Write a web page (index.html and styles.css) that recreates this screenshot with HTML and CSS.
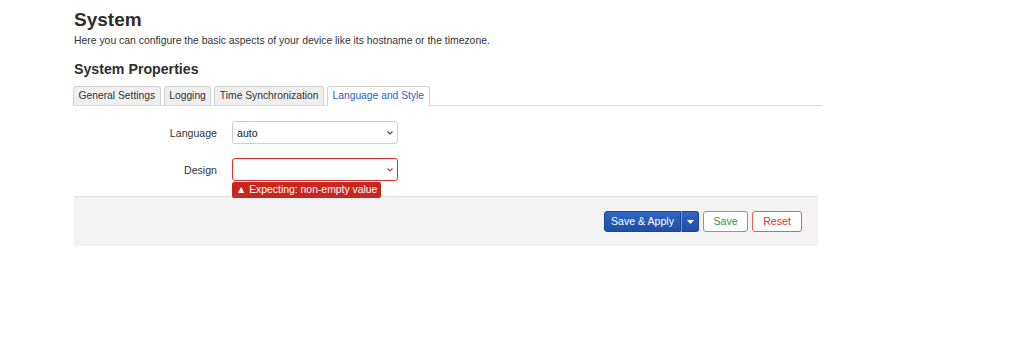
FILE: index.html
```html
<!DOCTYPE html>
<html>
<head>
<meta charset="utf-8">
<link rel="stylesheet" href="styles.css">
</head>
<body>
<div class="page">
  <h1 class="title">System</h1>
  <p class="desc">Here you can configure the basic aspects of your device like its hostname or the timezone.</p>
  <h2 class="section">System Properties</h2>
  <ul class="tabs">
    <li class="tab">General Settings</li>
    <li class="tab">Logging</li>
    <li class="tab">Time Synchronization</li>
    <li class="tab active">Language and Style</li>
  </ul>
  <div class="form">
    <div class="row">
      <div class="label">Language</div>
      <div class="field">
        <div class="select"><span>auto</span><svg class="chev" width="6" height="4" viewBox="0 0 6 4"><path d="M0.5 0.5 L3 3 L5.5 0.5" fill="none" stroke="#444" stroke-width="1.1"/></svg></div>
      </div>
    </div>
    <div class="row">
      <div class="label">Design</div>
      <div class="field">
        <div class="select invalid"><span></span><svg class="chev" width="6" height="4" viewBox="0 0 6 4"><path d="M0.5 0.5 L3 3 L5.5 0.5" fill="none" stroke="#d9322a" stroke-width="1.1"/></svg></div>
        <div class="tip">▲ Expecting: non-empty value</div>
      </div>
    </div>
  </div>
  <div class="actions">
    <div class="btn-group">
      <span class="btn apply">Save &amp; Apply</span><span class="btn apply caret"><svg width="7" height="4" viewBox="0 0 7 4"><path d="M0 0 H7 L3.5 4 Z" fill="#fff"/></svg></span>
    </div>
    <span class="btn save">Save</span>
    <span class="btn reset">Reset</span>
  </div>
</div>
</body>
</html>
```

FILE: styles.css
```css
html, body {
  margin: 0;
  padding: 0;
  background: #fff;
}
body {
  font-family: "Liberation Sans", Arial, Helvetica, sans-serif;
  color: #333;
}
.page {
  width: 748px;
  padding: 9px 0 0 74px;
}
.title {
  margin: 0;
  font-size: 19px;
  line-height: 22px;
  font-weight: bold;
  color: #2e2e2e;
}
.desc {
  margin: 3px 0 0;
  font-size: 10.4px;
  line-height: 14px;
  color: #333;
}
.section {
  margin: 12px 0 0;
  font-size: 14.2px;
  line-height: 18px;
  font-weight: bold;
  color: #2e2e2e;
}
.tabs {
  list-style: none;
  margin: 8px 0 0 -1px;
  padding: 0;
  display: flex;
  gap: 3px;
  border-bottom: 1px solid #dcdcdc;
}
.tab {
  height: 18px;
  line-height: 18px;
  padding: 0 4.5px;
  font-size: 10.3px;
  color: #333;
  background: #efefef;
  border: 1px solid #d2d2d2;
  border-radius: 3px 3px 0 0;
  margin-bottom: -1px;
  border-bottom: 1px solid #dcdcdc;
}
.tab.active {
  background: #fff;
  color: #2a63bf;
  border-bottom-color: #fff;
}
.form {
  padding-top: 15px;
  padding-bottom: 15px;
  display: flex;
  flex-direction: column;
  gap: 14px;
}
.row {
  display: flex;
  align-items: center;
}
.label {
  width: 143px;
  text-align: right;
  font-size: 10.6px;
  color: #333;
}
.field {
  margin-left: 15px;
  position: relative;
}
.select {
  width: 166px;
  height: 23px;
  box-sizing: border-box;
  border: 1px solid #cfcfcf;
  border-radius: 3px;
  display: flex;
  align-items: center;
  justify-content: space-between;
  padding: 0 4px 0 4px;
  font-size: 10.6px;
  color: #222;
  background: #fff;
}
.select.invalid {
  border-color: #d9322a;
}
.chev {
  display: block;
}
.tip {
  position: absolute;
  left: 0;
  top: 24px;
  height: 16px;
  line-height: 16px;
  padding: 0 4px;
  white-space: nowrap;
  background: #c8261e;
  color: #fff;
  font-size: 10.4px;
  border-radius: 2px;
  z-index: 2;
}
.actions {
  width: 744px;
  height: 49px;
  background: #f3f3f3;
  border-top: 1px solid #e0e0e0;
  display: flex;
  align-items: center;
  justify-content: flex-end;
  gap: 4px;
}
.actions .reset {
  margin-right: 16px;
}
.btn-group {
  display: flex;
}
.btn {
  box-sizing: border-box;
  height: 21px;
  line-height: 19px;
  font-size: 10.6px;
  border-radius: 3px;
  border: 1px solid;
  text-align: center;
  display: inline-block;
}
.apply {
  width: 77px;
  color: #fff;
  background: linear-gradient(#2f66c4, #1f4ea5);
  border-color: #1b4597;
  border-radius: 3px 0 0 3px;
}
.apply.caret {
  width: 18px;
  border-radius: 0 3px 3px 0;
  border-left: 1px solid #6f93d4;
  display: inline-flex;
  align-items: center;
  justify-content: center;
}
.save {
  width: 45px;
  color: #2a9a3a;
  background: #fff;
  border-color: #62b56c;
}
.reset {
  width: 50px;
  color: #d8321f;
  background: #fff;
  border-color: #e4604e;
}
```
